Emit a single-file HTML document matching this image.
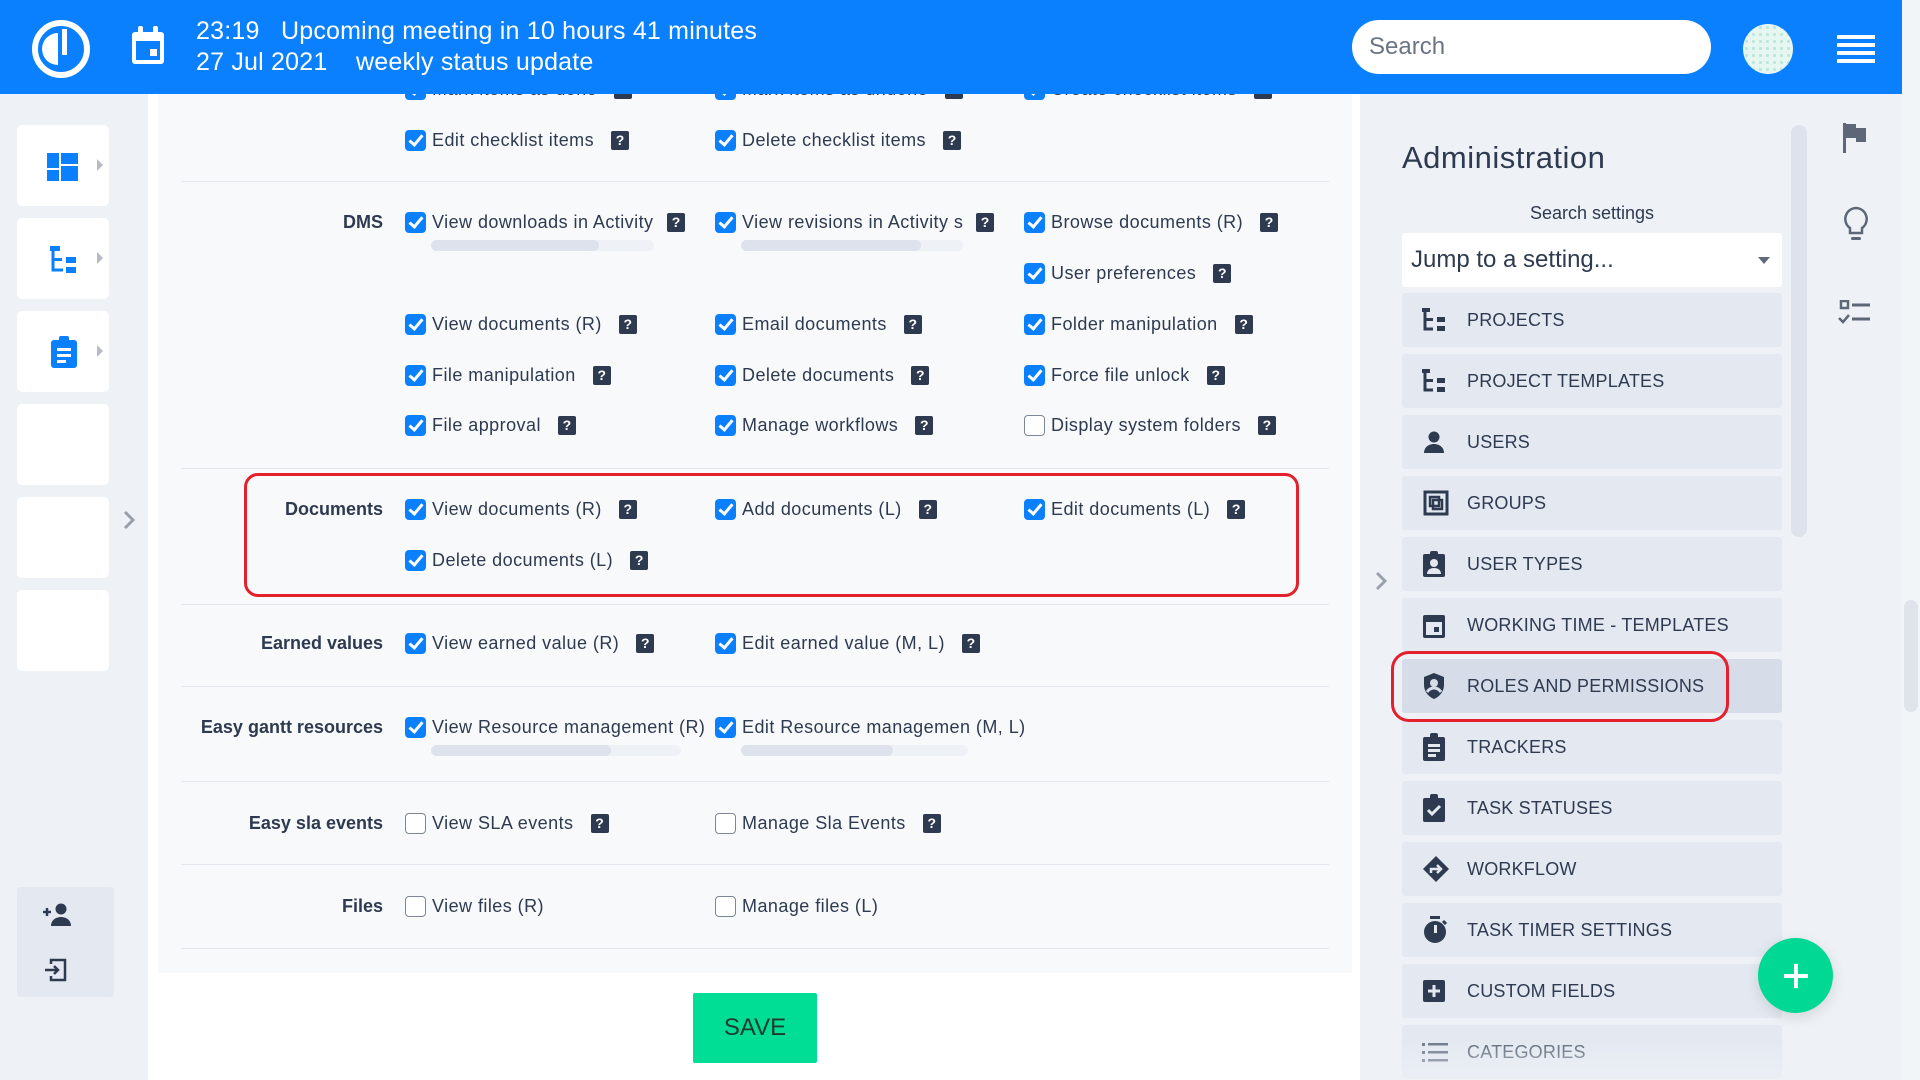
<!DOCTYPE html>
<html><head><meta charset="utf-8"><style>
*{box-sizing:border-box;margin:0;padding:0}
body{width:1920px;height:1080px;overflow:hidden;background:#fff;font-family:"Liberation Sans","DejaVu Sans",sans-serif;color:#2e3a50;position:relative}
.abs{position:absolute}
#hdr{left:0;top:0;width:1902px;height:94px;background:#0a80ff;z-index:5}
#rs{left:1902px;top:0;width:18px;height:1080px;background:#f2f5f8}
#ls{left:0;top:94px;width:148px;height:986px;background:#eef2f6}
.card{position:absolute;left:17px;width:92px;height:81px;background:#fff;border-radius:5px}
.tri{position:absolute;left:80px;top:34px;width:0;height:0;border-left:6px solid #b5bac4;border-top:6px solid transparent;border-bottom:6px solid transparent}
#panel{left:158px;top:94px;width:1194px;height:879px;background:#f8f9fb}
.sep{position:absolute;left:181px;width:1148px;height:1px;background:#e3e7ee}
.it{position:absolute;height:22px;display:flex;align-items:center;font-size:18px;color:#2e3a50;white-space:nowrap;letter-spacing:0.45px}
.cb{width:21px;height:21px;border-radius:4px;background:#0a80ff;margin-right:6px;flex:none;position:relative}
.cb:after{content:"";position:absolute;left:7px;top:2px;width:5px;height:11px;border:solid #fff;border-width:0 3px 3px 0;transform:rotate(40deg)}
.cb.u{background:#fff;border:1.5px solid #7d8696}
.cb.u:after{display:none}
.h{width:18px;height:19px;background:#2e3a50;color:#fff;font-size:14px;font-weight:bold;display:flex;align-items:center;justify-content:center;margin-left:17px;border-radius:2px;flex:none;letter-spacing:0}
.lb{position:absolute;right:1537px;font-size:18px;font-weight:bold;color:#2e3a50;white-space:nowrap;height:22px;line-height:22px}
.bar{position:absolute;height:11px;border-radius:6px;background:#eef1f5}
.bar i{display:block;height:11px;border-radius:6px;background:#dde2ec}
.clip{overflow:hidden;display:inline-block}
#rp{left:1360px;top:94px;width:542px;height:986px;background:#eef2f6}
.mi{position:absolute;left:1402px;width:380px;height:54px;background:#e4e9f1;border-radius:3px;display:flex;align-items:center;font-size:18px;color:#2e3a50;letter-spacing:0.2px}
.mi svg{position:absolute;left:20px}
.mi span{position:absolute;left:65px}
</style></head><body>
<div id="hdr" class="abs">
 <svg class="abs" style="left:31px;top:19px" width="60" height="60" viewBox="0 0 60 60"><circle cx="30" cy="30" r="26" fill="none" stroke="#fff" stroke-width="6"/><path d="M27 14 A16 16 0 0 0 27 46 Z" fill="#fff"/><rect x="31" y="10" width="5" height="26" fill="#fff"/></svg>
 <svg class="abs" style="left:130px;top:26px" width="36" height="40" viewBox="0 0 36 40"><rect x="2" y="6" width="32" height="32" rx="3" fill="#fff"/><rect x="6" y="15" width="24" height="19" fill="#0a80ff"/><rect x="8" y="0" width="5" height="9" rx="2" fill="#fff"/><rect x="23" y="0" width="5" height="9" rx="2" fill="#fff"/><rect x="20" y="23" width="7" height="7" fill="#fff"/></svg>
 <div class="abs" style="left:196px;top:16px;color:#fff;font-size:25px;line-height:31px;white-space:pre;letter-spacing:0.2px">23:19   Upcoming meeting in 10 hours 41 minutes
27 Jul 2021    weekly status update</div>
 <div class="abs" style="left:1352px;top:20px;width:359px;height:54px;background:#fff;border-radius:27px;font-size:24px;color:#6b7483;padding:13px 0 0 17px">Search</div>
 <div class="abs" style="left:1743px;top:24px;width:50px;height:50px;border-radius:50%;background:#e6f6f1;background-image:radial-gradient(#bfe6dc 30%,transparent 32%);background-size:7px 7px"></div>
 <div class="abs" style="left:1837px;top:35px;width:38px;height:4px;background:#fff;box-shadow:0 8px 0 #fff,0 16px 0 #fff,0 24px 0 #fff"></div>
</div>
<div id="rs" class="abs"><div class="abs" style="left:2px;top:600px;width:14px;height:112px;border-radius:7px;background:#dfe3ea"></div></div>
<div id="ls" class="abs"></div>
<div class="card" style="top:125px"><svg class="abs" style="left:30px;top:28px" width="32" height="28" viewBox="0 0 32 28"><rect x="0" y="0" width="12" height="15" fill="#0a80ff"/><rect x="0" y="17" width="12" height="11" fill="#0a80ff"/><rect x="14" y="0" width="17" height="11" fill="#0a80ff"/><rect x="14" y="13" width="17" height="15" fill="#0a80ff"/></svg><div class="tri"></div></div>
<div class="card" style="top:218px"><svg class="abs" style="left:33px;top:28px" width="30" height="28" viewBox="0 0 30 28"><rect x="0" y="0" width="10" height="5" fill="#0a80ff"/><path d="M3 5v19h10" stroke="#0a80ff" stroke-width="3" fill="none"/><rect x="16" y="11" width="10" height="6" fill="#0a80ff"/><rect x="16" y="21" width="10" height="6" fill="#0a80ff"/><rect x="3" y="12" width="9" height="3" fill="#0a80ff"/></svg><div class="tri"></div></div>
<div class="card" style="top:311px"><svg class="abs" style="left:33px;top:25px" width="28" height="32" viewBox="0 0 28 32"><rect x="1" y="4" width="26" height="28" rx="3" fill="#0a80ff"/><rect x="9" y="0" width="10" height="7" rx="2" fill="#0a80ff"/><rect x="7" y="12" width="14" height="3" fill="#fff"/><rect x="7" y="18" width="14" height="3" fill="#fff"/><rect x="7" y="24" width="9" height="3" fill="#fff"/></svg><div class="tri"></div></div>
<div class="card" style="top:404px"></div>
<div class="card" style="top:497px"></div>
<div class="card" style="top:590px"></div>
<svg class="abs" style="left:122px;top:509px" width="14" height="22" viewBox="0 0 14 22"><path d="M3 3l8 8-8 8" stroke="#9aa1ad" stroke-width="3" fill="none"/></svg>
<div class="abs" style="left:17px;top:887px;width:97px;height:110px;background:#e4e9f1;border-radius:3px">
 <svg class="abs" style="left:24px;top:16px" width="32" height="24" viewBox="0 0 32 24"><path d="M2 9h8M6 5v8" stroke="#2e3a50" stroke-width="2.5"/><circle cx="20" cy="6" r="5.5" fill="#2e3a50"/><path d="M10 23c0-6 5-9 10-9s10 3 10 9z" fill="#2e3a50"/></svg>
 <svg class="abs" style="left:26px;top:70px" width="26" height="26" viewBox="0 0 26 26"><path d="M8 7V3h14v20H8v-4" stroke="#2e3a50" stroke-width="2.5" fill="none"/><path d="M2 13h13M11 9l4 4-4 4" stroke="#2e3a50" stroke-width="2.5" fill="none"/></svg>
</div>

<div id="panel" class="abs"></div>
<div class="sep" style="top:181px"></div><div class="sep" style="top:468px"></div><div class="sep" style="top:604px"></div><div class="sep" style="top:686px"></div><div class="sep" style="top:781px"></div><div class="sep" style="top:864px"></div><div class="sep" style="top:948px"></div>

<div class="it" style="left:405px;top:78px"><span class="cb"></span>Mark items as done<span class="h">?</span></div>
<div class="it" style="left:715px;top:78px"><span class="cb"></span>Mark items as undone<span class="h">?</span></div>
<div class="it" style="left:1024px;top:78px"><span class="cb"></span>Create checklist items<span class="h">?</span></div>

<div class="it" style="left:405px;top:129px"><span class="cb"></span>Edit checklist items<span class="h">?</span></div>
<div class="it" style="left:715px;top:129px"><span class="cb"></span>Delete checklist items<span class="h">?</span></div>

<div class="lb" style="top:211px">DMS</div>
<div class="it" style="left:405px;top:211px"><span class="cb"></span><span class="clip" style="width:223px">View downloads in Activity</span><span class="h" style="margin-left:12px">?</span></div>
<div class="it" style="left:715px;top:211px"><span class="cb"></span><span class="clip" style="width:222px">View revisions in Activity s</span><span class="h" style="margin-left:12px">?</span></div>
<div class="it" style="left:1024px;top:211px"><span class="cb"></span>Browse documents (R)<span class="h">?</span></div>
<div class="bar" style="left:431px;top:240px;width:223px"><i style="width:168px"></i></div>
<div class="bar" style="left:741px;top:240px;width:222px"><i style="width:180px"></i></div>
<div class="it" style="left:1024px;top:262px"><span class="cb"></span>User preferences<span class="h">?</span></div>
<div class="it" style="left:405px;top:313px"><span class="cb"></span>View documents (R)<span class="h">?</span></div>
<div class="it" style="left:715px;top:313px"><span class="cb"></span>Email documents<span class="h">?</span></div>
<div class="it" style="left:1024px;top:313px"><span class="cb"></span>Folder manipulation<span class="h">?</span></div>
<div class="it" style="left:405px;top:364px"><span class="cb"></span>File manipulation<span class="h">?</span></div>
<div class="it" style="left:715px;top:364px"><span class="cb"></span>Delete documents<span class="h">?</span></div>
<div class="it" style="left:1024px;top:364px"><span class="cb"></span>Force file unlock<span class="h">?</span></div>
<div class="it" style="left:405px;top:414px"><span class="cb"></span>File approval<span class="h">?</span></div>
<div class="it" style="left:715px;top:414px"><span class="cb"></span>Manage workflows<span class="h">?</span></div>
<div class="it" style="left:1024px;top:414px"><span class="cb u"></span>Display system folders<span class="h">?</span></div>

<div class="lb" style="top:498px">Documents</div>
<div class="it" style="left:405px;top:498px"><span class="cb"></span>View documents (R)<span class="h">?</span></div>
<div class="it" style="left:715px;top:498px"><span class="cb"></span>Add documents (L)<span class="h">?</span></div>
<div class="it" style="left:1024px;top:498px"><span class="cb"></span>Edit documents (L)<span class="h">?</span></div>
<div class="it" style="left:405px;top:549px"><span class="cb"></span>Delete documents (L)<span class="h">?</span></div>
<div class="abs" style="left:244px;top:473px;width:1055px;height:124px;border:3.5px solid #e3202c;border-radius:14px"></div>

<div class="lb" style="top:632px">Earned values</div>
<div class="it" style="left:405px;top:632px"><span class="cb"></span>View earned value (R)<span class="h">?</span></div>
<div class="it" style="left:715px;top:632px"><span class="cb"></span>Edit earned value (M, L)<span class="h">?</span></div>

<div class="lb" style="top:716px">Easy gantt resources</div>
<div class="it" style="left:405px;top:716px"><span class="cb"></span><span class="clip" style="width:282px">View Resource management (R)</span></div>
<div class="it" style="left:715px;top:716px"><span class="cb"></span>Edit Resource managemen (M, L)</div>
<div class="bar" style="left:431px;top:745px;width:250px"><i style="width:180px"></i></div>
<div class="bar" style="left:741px;top:745px;width:227px"><i style="width:152px"></i></div>

<div class="lb" style="top:812px">Easy sla events</div>
<div class="it" style="left:405px;top:812px"><span class="cb u"></span>View SLA events<span class="h">?</span></div>
<div class="it" style="left:715px;top:812px"><span class="cb u"></span>Manage Sla Events<span class="h">?</span></div>

<div class="lb" style="top:895px">Files</div>
<div class="it" style="left:405px;top:895px"><span class="cb u"></span>View files (R)</div>
<div class="it" style="left:715px;top:895px"><span class="cb u"></span>Manage files (L)</div>

<div class="abs" style="left:693px;top:993px;width:124px;height:70px;background:#00dd95;border-radius:2px;color:#1f3a2e;font-size:24px;display:flex;align-items:center;justify-content:center">SAVE</div>

<div id="rp" class="abs"></div>
<svg class="abs" style="left:1374px;top:570px" width="14" height="22" viewBox="0 0 14 22"><path d="M3 3l8 8-8 8" stroke="#9aa1ad" stroke-width="3" fill="none"/></svg>
<div class="abs" style="left:1791px;top:125px;width:16px;height:412px;border-radius:8px;background:#dde2ec"></div>
<div class="abs" style="left:1402px;top:140px;font-size:31px;color:#2e3a50;letter-spacing:0.5px">Administration</div>
<div class="abs" style="left:1402px;top:203px;width:380px;text-align:center;font-size:18px">Search settings</div>
<div class="abs" style="left:1402px;top:233px;width:380px;height:54px;background:#fff;border-radius:3px;font-size:24px;padding:13px 0 0 9px">Jump to a setting...<div class="abs" style="right:12px;top:24px;border-top:7px solid #606a7c;border-left:6px solid transparent;border-right:6px solid transparent"></div></div>

<div class="mi" style="top:293px"><svg width="26" height="24" viewBox="0 0 26 24"><rect x="0" y="0" width="8" height="4" fill="#2e3a50"/><path d="M3 4v17h8" stroke="#2e3a50" stroke-width="3" fill="none"/><rect x="15" y="9" width="8" height="5" fill="#2e3a50"/><rect x="15" y="18" width="8" height="5" fill="#2e3a50"/><rect x="3" y="10" width="8" height="3" fill="#2e3a50"/></svg><span>PROJECTS</span></div>
<div class="mi" style="top:354px"><svg width="26" height="24" viewBox="0 0 26 24"><rect x="0" y="0" width="8" height="4" fill="#2e3a50"/><path d="M3 4v17h8" stroke="#2e3a50" stroke-width="3" fill="none"/><rect x="15" y="9" width="8" height="5" fill="#2e3a50"/><rect x="15" y="18" width="8" height="5" fill="#2e3a50"/><rect x="3" y="10" width="8" height="3" fill="#2e3a50"/></svg><span>PROJECT TEMPLATES</span></div>
<div class="mi" style="top:415px"><svg width="24" height="24" viewBox="0 0 24 24"><circle cx="12" cy="7" r="5.5" fill="#2e3a50"/><path d="M2 23c0-6 5-9 10-9s10 3 10 9z" fill="#2e3a50"/></svg><span>USERS</span></div>
<div class="mi" style="top:476px"><svg width="28" height="28" viewBox="0 0 28 28"><rect x="3" y="3" width="22" height="22" stroke="#2e3a50" stroke-width="3" fill="none"/><rect x="8" y="8" width="9" height="9" stroke="#2e3a50" stroke-width="2.5" fill="none"/><rect x="11" y="11" width="9" height="9" stroke="#2e3a50" stroke-width="2.5" fill="none"/></svg><span>GROUPS</span></div>
<div class="mi" style="top:537px"><svg width="24" height="26" viewBox="0 0 24 26"><rect x="1" y="3" width="22" height="23" rx="2" fill="#2e3a50"/><rect x="8" y="0" width="8" height="6" rx="2" fill="#2e3a50"/><circle cx="12" cy="12" r="4" fill="#e4e9f1"/><path d="M5 23c0-4 3-6 7-6s7 2 7 6z" fill="#e4e9f1"/></svg><span>USER TYPES</span></div>
<div class="mi" style="top:598px"><svg width="24" height="26" viewBox="0 0 24 26"><rect x="1" y="3" width="22" height="23" rx="2" fill="#2e3a50"/><rect x="4" y="10" width="16" height="13" fill="#e4e9f1"/><rect x="12" y="15" width="5" height="5" fill="#2e3a50"/></svg><span>WORKING TIME - TEMPLATES</span></div>
<div class="mi" style="top:659px;background:#d6dde8"><svg width="24" height="28" viewBox="0 0 24 28"><path d="M12 1L2 5v8c0 7 5 12 10 14 5-2 10-7 10-14V5z" fill="#2e3a50"/><circle cx="12" cy="11" r="4" fill="#d6dde8"/><path d="M5 20c2-3 4-4 7-4s5 1 7 4" stroke="#d6dde8" stroke-width="3" fill="none"/></svg><span>ROLES AND PERMISSIONS</span></div>
<div class="mi" style="top:720px"><svg width="24" height="28" viewBox="0 0 24 28"><rect x="1" y="4" width="22" height="24" rx="2" fill="#2e3a50"/><rect x="8" y="0" width="8" height="6" rx="2" fill="#2e3a50"/><rect x="6" y="11" width="12" height="3" fill="#e4e9f1"/><rect x="6" y="16" width="12" height="3" fill="#e4e9f1"/><rect x="6" y="21" width="8" height="3" fill="#e4e9f1"/></svg><span>TRACKERS</span></div>
<div class="mi" style="top:781px"><svg width="24" height="28" viewBox="0 0 24 28"><rect x="1" y="4" width="22" height="24" rx="2" fill="#2e3a50"/><rect x="8" y="0" width="8" height="6" rx="2" fill="#2e3a50"/><path d="M6 16l4 4 8-8" stroke="#e4e9f1" stroke-width="3" fill="none"/></svg><span>TASK STATUSES</span></div>
<div class="mi" style="top:842px"><svg width="28" height="28" viewBox="0 0 28 28"><path d="M14 1l13 13-13 13L1 14z" fill="#2e3a50"/><path d="M9 18v-4h9M15 10l4 4-4 4" stroke="#e4e9f1" stroke-width="2.5" fill="none"/></svg><span>WORKFLOW</span></div>
<div class="mi" style="top:903px"><svg width="26" height="28" viewBox="0 0 26 28"><circle cx="13" cy="16" r="11" fill="#2e3a50"/><rect x="8" y="0" width="10" height="3" fill="#2e3a50"/><rect x="12" y="9" width="3" height="8" fill="#e4e9f1"/><path d="M21 5l3 3" stroke="#2e3a50" stroke-width="3"/></svg><span>TASK TIMER SETTINGS</span></div>
<div class="mi" style="top:964px"><svg width="24" height="24" viewBox="0 0 24 24"><rect x="1" y="1" width="22" height="22" rx="2" fill="#2e3a50"/><path d="M12 6v12M6 12h12" stroke="#e4e9f1" stroke-width="3"/></svg><span>CUSTOM FIELDS</span></div>
<div class="mi" style="top:1025px;color:#5d6778"><svg width="26" height="22" viewBox="0 0 26 22"><g fill="#6b7586"><rect x="0" y="2" width="3" height="3"/><rect x="0" y="10" width="3" height="3"/><rect x="0" y="18" width="3" height="3"/><rect x="6" y="2" width="20" height="2.5"/><rect x="6" y="10" width="20" height="2.5"/><rect x="6" y="18" width="20" height="2.5"/></g></svg><span>CATEGORIES</span></div>
<div class="abs" style="left:1360px;top:1040px;width:542px;height:40px;background:linear-gradient(rgba(238,242,246,0),rgba(238,242,246,.7))"></div>

<svg class="abs" style="left:1842px;top:123px" width="26" height="30" viewBox="0 0 26 30"><rect x="1" y="0" width="3" height="30" fill="#5d6778"/><path d="M4 1h10v4h10v14H14v-4H4z" fill="#5d6778"/></svg>
<svg class="abs" style="left:1842px;top:206px" width="28" height="36" viewBox="0 0 28 36"><path d="M14 2a11 11 0 0 0-6 20v5h12v-5a11 11 0 0 0-6-20z" stroke="#5d6778" stroke-width="2.5" fill="none"/><rect x="9" y="31" width="10" height="3" rx="1.5" fill="#5d6778"/></svg>
<svg class="abs" style="left:1838px;top:300px" width="34" height="26" viewBox="0 0 34 26"><rect x="3" y="1" width="7" height="7" stroke="#5d6778" stroke-width="2.5" fill="none"/><path d="M14 5h18M14 19h18" stroke="#5d6778" stroke-width="3"/><path d="M1 18l4 4 6-7" stroke="#5d6778" stroke-width="2.5" fill="none"/></svg>
<div class="abs" style="left:1758px;top:938px;width:75px;height:75px;border-radius:50%;background:#00d893;box-shadow:0 4px 14px rgba(0,0,0,.12)"><div class="abs" style="left:26px;top:36px;width:24px;height:4px;background:#fff"></div><div class="abs" style="left:36px;top:26px;width:4px;height:24px;background:#fff"></div></div>
<div class="abs" style="left:1391px;top:651px;width:338px;height:71px;border:3.5px solid #e3202c;border-radius:18px"></div>
</body></html>
